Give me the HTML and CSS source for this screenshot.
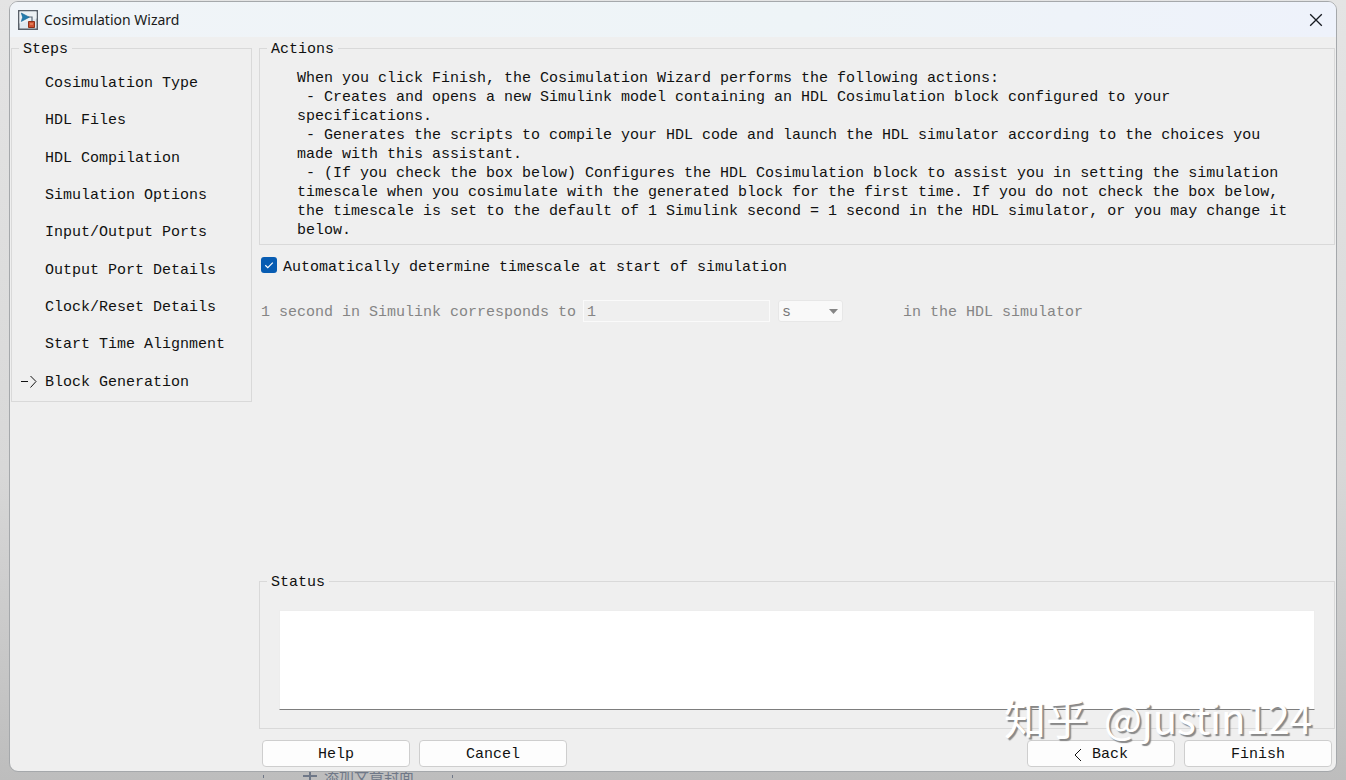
FILE: index.html
```html
<!DOCTYPE html>
<html lang="en">
<head>
<meta charset="utf-8">
<title>Cosimulation Wizard</title>
<link rel="stylesheet" href="styles.css">
</head>
<body>
<div class="backdrop" lang="zh"><svg width="14" height="14" viewBox="0 0 14 14" aria-hidden="true"><path d="M7 0v14M0 7h14" stroke="currentColor" stroke-width="2"/></svg>添加文章封面</div>
<div class="window">
  <header class="titlebar">
    <svg class="app-icon" width="20" height="20" viewBox="0 0 20 20" aria-hidden="true">
      <rect x=".75" y=".75" width="18.5" height="18.5" fill="#dfe7ee" stroke="#596069" stroke-width="1.5"/>
      <path d="M1.5 1.5h17v7l-17 5z" fill="#edf1f4"/>
      <path d="M10 7h4v5" fill="none" stroke="#5d6a78" stroke-width="1.2"/>
      <path d="M3.3 3l8 4.2-8 4.3 1.3-4.3z" fill="#237cae" stroke="#17618e" stroke-width=".6"/>
      <path d="M10.5 11.5h6v6h-6z" fill="#ce5131" stroke="#8c3118"/>
      <path d="M12 13h3v2h-3z" fill="#e27a55"/>
    </svg>
    <h1 class="title">Cosimulation Wizard</h1>
    <button class="close" type="button" aria-label="Close"><svg width="14" height="14" viewBox="0 0 14 14" aria-hidden="true"><path d="M1.2 1.2l11.6 11.6M12.8 1.2L1.2 12.8" stroke="#161a20" stroke-width="1.3"/></svg></button>
  </header>
  <main class="content">
    <fieldset class="panel steps">
      <legend>Steps</legend>
      <ol class="step-list">
        <li>Cosimulation Type</li>
        <li>HDL Files</li>
        <li>HDL Compilation</li>
        <li>Simulation Options</li>
        <li>Input/Output Ports</li>
        <li>Output Port Details</li>
        <li>Clock/Reset Details</li>
        <li>Start Time Alignment</li>
        <li class="current" aria-current="step"><svg class="arrow" width="16" height="14" viewBox="0 0 16 14" aria-hidden="true"><path d="M0 6.5h7M9.5 1l5.5 5.5-5.5 6" fill="none" stroke="#111"/></svg>Block Generation</li>
      </ol>
    </fieldset>
    <section class="work">
      <fieldset class="panel actions">
        <legend>Actions</legend>
        <div class="actions-text">
          <p>When you click Finish, the Cosimulation Wizard performs the following actions:</p>
          <p class="item">- Creates and opens a new Simulink model containing an HDL Cosimulation block configured to your specifications.</p>
          <p class="item">- Generates the scripts to compile your HDL code and launch the HDL simulator according to the choices you made with this assistant.</p>
          <p class="item">- (If you check the box below) Configures the HDL Cosimulation block to assist you in setting the simulation timescale when you cosimulate with the generated block for the first time. If you do not check the box below, the timescale is set to the default of 1 Simulink second = 1 second in the HDL simulator, or you may change it below.</p>
        </div>
      </fieldset>
      <div class="auto-row">
        <span class="check">
          <input type="checkbox" id="auto" checked>
          <svg width="16" height="16" viewBox="0 0 16 16" aria-hidden="true"><path d="M4.3 8.2l2.5 2.4 5-5" fill="none" stroke="#fff" stroke-width="1.2"/></svg>
        </span>
        <label for="auto">Automatically determine timescale at start of simulation</label>
      </div>
      <div class="scale-row">
        <label for="amount">1 second in Simulink corresponds to</label>
        <input class="amount" id="amount" type="text" value="1" disabled>
        <span class="unit">
          <select id="unit" aria-label="Time unit" disabled><option>s</option></select>
          <svg width="9" height="5" viewBox="0 0 9 5" aria-hidden="true"><path d="M0 0h9L4.5 5z" fill="#858585"/></svg>
        </span>
        <label class="suffix" for="unit">in the HDL simulator</label>
      </div>
      <fieldset class="panel status">
        <legend>Status</legend>
        <textarea aria-label="Status" readonly></textarea>
      </fieldset>
      <footer class="buttons">
        <button class="btn" type="button">Help</button>
        <button class="btn" type="button">Cancel</button>
        <button class="btn back" type="button"><svg width="8" height="14" viewBox="0 0 8 14" aria-hidden="true"><path d="M7 1L1 7l6 6" fill="none" stroke="#111"/></svg>Back</button>
        <button class="btn" type="button">Finish</button>
      </footer>
    </section>
  </main>
</div>
<div class="watermark"><span class="site" lang="zh">知乎</span><span>@justin124</span></div>
</body>
</html>
```
FILE: styles.css
```css
* {
  box-sizing: border-box;
}

body {
  margin: 0;
  min-height: 100vh;
  display: flex;
  position: relative;
  overflow: hidden;
  padding: 1px 9px 8px;
  background: linear-gradient(#e4e4e4, #d8d8d8 60%, #bdbdbd);
  color: #111;
  font: 15px/19px "Liberation Mono", "Courier New", monospace;
}

.backdrop {
  position: absolute;
  left: 263px;
  bottom: -7px;
  width: 190px;
  height: 22px;
  display: flex;
  align-items: center;
  gap: 7px;
  color: #6f7888;
  font: 15px/20px "Noto Sans CJK SC", sans-serif;
}

.backdrop::before,
.backdrop::after {
  content: "";
  width: 1px;
  height: 3px;
  background: #6f7888;
}

.backdrop::before {
  margin-right: 32px;
}

.backdrop::after {
  margin-left: auto;
}

.window {
  position: relative;
  flex: 1;
  display: flex;
  flex-direction: column;
  overflow: hidden;
  border: 1px solid #a5a8ab;
  border-radius: 9px;
  background: #efefef;
}

.titlebar {
  flex: none;
  display: flex;
  align-items: center;
  gap: 6px;
  height: 35px;
  padding: 0 13px 0 8px;
  background: linear-gradient(90deg, #f0f4f8, #eef4f7 60%, #eef2fb);
}

.title {
  flex: 1;
  margin: 0;
  color: #1a1a1a;
  font: 14px/20px "Noto Sans", "Open Sans", sans-serif;
}

.close {
  display: flex;
  padding: 0;
  border: 0;
  background: none;
}

.content {
  flex: 1;
  display: grid;
  grid-template-columns: 241px 1fr;
  align-items: start;
  gap: 7px;
  padding: 0 1px 4px;
}

.panel {
  min-width: 0;
  margin: 0;
  padding: 0;
  border: 1px solid #d9d9d9;
}

legend {
  margin-left: 7px;
  padding: 3px 4px 0;
}

.step-list {
  display: grid;
  grid-auto-rows: 1fr;
  height: 336px;
  margin: 6px 0 0;
  padding: 0;
  list-style: none;
}

.step-list li {
  display: flex;
  align-items: center;
  padding-left: 33px;
}

.step-list .current {
  gap: 8px;
  padding-left: 9px;
}

.work {
  align-self: stretch;
  display: flex;
  flex-direction: column;
}

.actions-text {
  padding: 10px 36px 4px 37px;
}

.actions-text p {
  margin: 0;
}

.actions-text .item {
  text-indent: 9px;
}

.auto-row {
  display: flex;
  align-items: flex-start;
  gap: 6px;
  margin-top: 12px;
  padding-left: 2px;
}

.auto-row label {
  padding-top: 1px;
}

.check {
  display: grid;
}

.check > * {
  grid-area: 1 / 1;
}

.check svg {
  pointer-events: none;
}

.check input {
  appearance: none;
  width: 16px;
  height: 16px;
  margin: 0;
  border-radius: 3px;
  background: #a0a0a0;
}

.check input:checked {
  background: #075cb2;
}

.scale-row {
  display: flex;
  align-items: center;
  margin-top: 23px;
  padding-left: 2px;
  color: #858585;
}

.scale-row label {
  padding-top: 3px;
}

.amount {
  width: 187px;
  height: 22px;
  margin-left: 7px;
  padding: 2px 3px 0;
  border: 1px solid #fafafa;
  background: #efefef;
  color: #858585;
  font: inherit;
}

.unit {
  display: grid;
  align-items: center;
  margin-left: 8px;
}

.unit > * {
  grid-area: 1 / 1;
}

.unit select {
  appearance: none;
  width: 65px;
  height: 22px;
  padding: 2px 3px 0;
  border: 1px solid #e7e7e7;
  border-radius: 3px;
  background: #f9f9f9;
  color: #777;
  font: inherit;
  opacity: 1;
}

.unit svg {
  justify-self: end;
  margin-right: 5px;
}

.suffix {
  margin-left: 60px;
}

.status {
  margin-top: auto;
}

.status textarea {
  display: block;
  width: calc(100% - 38px);
  height: 100px;
  margin: 18px 19px;
  padding: 4px;
  border: 1px solid #ededed;
  border-bottom-color: #7d7d7d;
  background: #fff;
  font: inherit;
  resize: none;
}

.buttons {
  display: flex;
  gap: 9px;
  margin-top: 11px;
  padding: 0 3px;
}

.btn {
  display: flex;
  align-items: center;
  justify-content: center;
  gap: 10px;
  width: 148px;
  height: 27px;
  padding: 2px 0 0;
  border: 1px solid #cecece;
  border-radius: 4px;
  background: #fdfdfd;
  color: #111;
  font: inherit;
}

.back {
  margin-left: auto;
}

.watermark {
  position: absolute;
  right: 34px;
  bottom: 35px;
  display: flex;
  align-items: center;
  gap: 16px;
  color: #fff;
  font: 40px/56px "Noto Sans CJK SC", sans-serif;
  text-shadow: 2px 2px 1px #888;
  pointer-events: none;
}

.site {
  font-size: 42px;
}
```
